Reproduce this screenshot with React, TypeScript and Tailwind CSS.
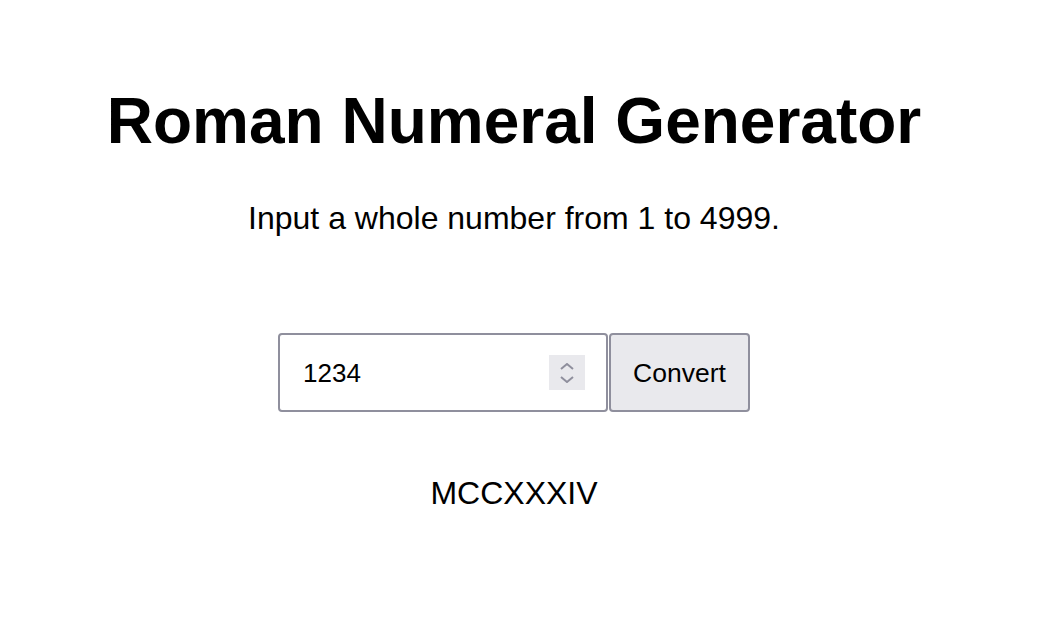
import { useState } from "react";

const toRoman = (n: number) => {
  const table: [number, string][] = [
    [1000, "M"], [900, "CM"], [500, "D"], [400, "CD"],
    [100, "C"], [90, "XC"], [50, "L"], [40, "XL"],
    [10, "X"], [9, "IX"], [5, "V"], [4, "IV"], [1, "I"],
  ];
  let out = "";
  for (const [v, s] of table) {
    while (n >= v) {
      out += s;
      n -= v;
    }
  }
  return out;
};

const App = () => {
  const [value, setValue] = useState("1234");
  const [result, setResult] = useState(toRoman(1234));

  const convert = () => {
    const n = parseInt(value, 10);
    if (!Number.isNaN(n) && n >= 1 && n <= 4999) setResult(toRoman(n));
    else setResult("Please enter a valid number");
  };

  return (
    <div className="min-h-screen bg-white text-black font-['Liberation_Sans',Arial,sans-serif]">
      <div className="flex flex-col items-center pr-[12px] pt-[84px]">
        {/* Title */}
        <h1 className="text-[64px] font-bold leading-[74px]">Roman Numeral Generator</h1>

        <p className="mt-[42px] text-[32px] leading-[37px]">Input a whole number from 1 to 4999.</p>

        {/* Input + button */}
        <div className="mt-[96px] flex gap-[1px]">
          <div className="flex h-[79px] w-[330px] items-center rounded-[4px] border-2 border-[#8f8f9d] bg-white pl-[23px] pr-[21px] pt-[2px]">
            <input
              type="text"
              value={value}
              onChange={(e) => setValue(e.target.value)}
              className="min-w-0 flex-1 bg-transparent text-[26px] outline-none"
            />
            <div className="-mt-[2px] flex h-[35px] w-[36px] flex-col items-center justify-center gap-[6px] bg-[#e9e9ed]">
              <svg width="14" height="7" viewBox="0 0 14 7" fill="none" stroke="#8f8f9d" strokeWidth="2">
                <path d="M1 6 L7 1 L13 6" />
              </svg>
              <svg width="14" height="7" viewBox="0 0 14 7" fill="none" stroke="#8f8f9d" strokeWidth="2">
                <path d="M1 1 L7 6 L13 1" />
              </svg>
            </div>
          </div>
          <button
            onClick={convert}
            className="h-[79px] w-[141px] rounded-[4px] border-2 border-[#8f8f9d] bg-[#e9e9ed] pt-[2px] text-[26.5px]"
          >
            Convert
          </button>
        </div>

        {/* Output */}
        <div className="mt-[63px] text-[32px] leading-[37px]">{result}</div>
      </div>
    </div>
  );
};

export default App;
